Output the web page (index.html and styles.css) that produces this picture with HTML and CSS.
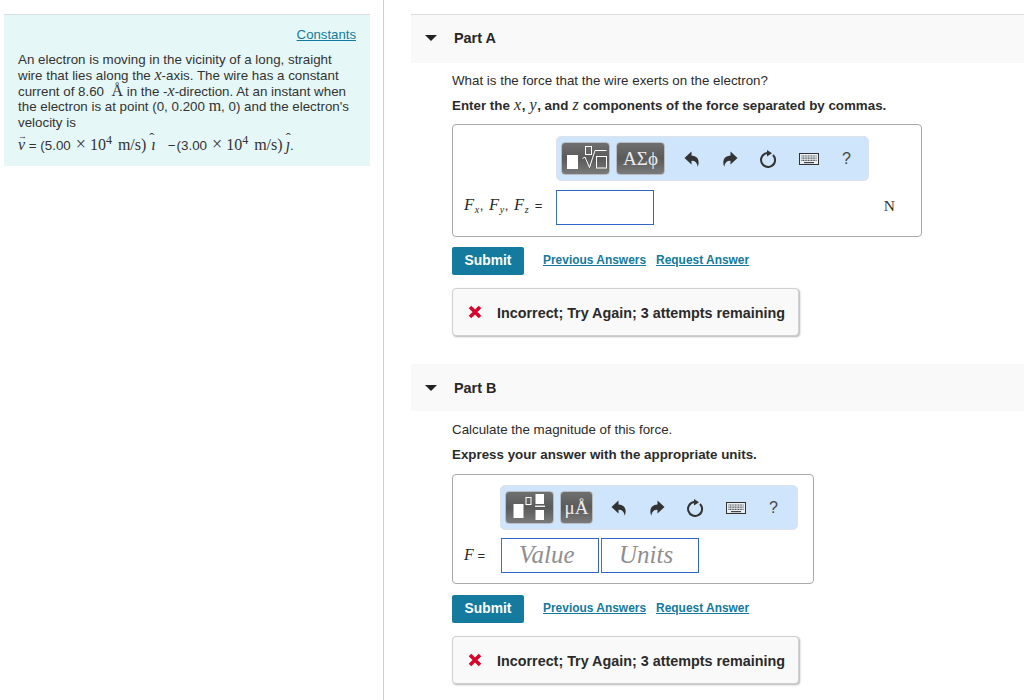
FILE: index.html
```html
<!DOCTYPE html>
<html lang="en">
<head>
<meta charset="utf-8">
<title>Part A and B</title>
<link rel="stylesheet" href="styles.css">
</head>
<body>
<svg class="defs" width="0" height="0" aria-hidden="true">
  <defs>
    <symbol id="undo" viewBox="0 0 16 16"><path d="M7.5 0.5 L0.5 7 L7.5 13.5 V9.8 C11 9.6 13 11.5 13.8 15.8 C15.8 10 14.5 5 7.5 4.4 Z"/></symbol>
    <symbol id="redo" viewBox="0 0 16 16"><path d="M8.5 0.5 L15.5 7 L8.5 13.5 V9.8 C5 9.6 3 11.5 2.2 15.8 C0.2 10 1.5 5 8.5 4.4 Z"/></symbol>
    <symbol id="reset" viewBox="0 0 18 18"><path d="M14 5 A7 7 0 1 1 8.5 3" fill="none" stroke="#333" stroke-width="2"/><path d="M8 0 L13 3.2 L8 6.5 Z" fill="#333"/></symbol>
    <symbol id="kbd" viewBox="0 0 20 12"><rect x="0.5" y="0.5" width="19" height="11" fill="#e8eef4" stroke="#333"/><path d="M2.5 3 H17.5 M2.5 5.2 H17.5 M2.5 7.4 H17.5" stroke="#444" stroke-width="1.2" stroke-dasharray="1 .6"/><path d="M5 9.6 H15" stroke="#444" stroke-width="1.2"/></symbol>
  </defs>
</svg>
<div class="page">
  <aside class="left">
    <div class="intro">
      <a class="constants" href="#">Constants</a>
      <p class="prob">An electron is moving in the vicinity of a long, straight wire that lies along the <i class="m">x</i>-axis. The wire has a constant current of 8.60 &nbsp;<span class="r">Å</span> in the -<i class="m">x</i>-direction. At an instant when the electron is at point (0, 0.200 <span class="r">m</span>, 0) and the electron's velocity is</p>
      <p class="eq"><i class="m vec">v</i> = (5.00<span class="r tm">×</span><span class="r">10<sup>4</sup></span><span class="r un">m/s)</span><i class="m hat">ı</i><span class="minus">−</span>(3.00<span class="r tm">×</span><span class="r">10<sup>4</sup></span><span class="r un">m/s)</span><i class="m hat hat-j">ȷ</i>.</p>
    </div>
  </aside>
  <main class="right">
    <section class="part">
      <h2 class="head"><span class="tri"></span>Part A</h2>
      <div class="body">
        <p class="q">What is the force that the wire exerts on the electron?</p>
        <p class="ins">Enter the <i class="m">x</i>, <i class="m">y</i>, and <i class="m">z</i> components of the force separated by commas.</p>
        <div class="ans ans-a">
          <div class="tb-row tb-row-a">
            <div class="tb tb-a">
              <span class="btn btn-l btn-root">
                <span class="sq-big"></span>
                <svg class="root" width="26" height="26" viewBox="0 0 26 26"><path d="M0.5 12.5 L3 11 L7.5 21.5 L13 4.5 H24.5" fill="none" stroke="#fff" stroke-width="1"/><rect x="3.5" y="0.5" width="6" height="8" fill="none" stroke="#fff"/><rect x="14.5" y="10.5" width="10" height="11.5" fill="none" stroke="#fff"/></svg>
              </span>
              <span class="btn btn-l greek">ΑΣϕ</span>
              <span class="tools">
                <svg class="i16"><use href="#undo"/></svg>
                <svg class="i16"><use href="#redo"/></svg>
                <svg class="i18"><use href="#reset"/></svg>
                <svg class="i20"><use href="#kbd"/></svg>
                <span class="help">?</span>
              </span>
            </div>
          </div>
          <div class="in-row">
            <span class="lab lab-a"><i class="m">F<sub>x</sub></i>, <i class="m">F<sub>y</sub></i>, <i class="m">F<sub>z</sub></i> =</span>
            <span class="field"></span>
            <span class="unit">N</span>
          </div>
        </div>
        <div class="acts">
          <span class="submit">Submit</span>
          <a class="alink" href="#">Previous Answers</a>
          <a class="alink" href="#">Request Answer</a>
        </div>
        <div class="fb"><svg class="x" width="14" height="14" viewBox="0 0 14 14"><path d="M2 2 L12 12 M12 2 L2 12" stroke="#d9042b" stroke-width="3.6"/></svg>Incorrect; Try Again; 3 attempts remaining</div>
      </div>
    </section>
    <section class="part">
      <h2 class="head head-b"><span class="tri"></span>Part B</h2>
      <div class="body body-b">
        <p class="q">Calculate the magnitude of this force.</p>
        <p class="ins">Express your answer with the appropriate units.</p>
        <div class="ans ans-b">
          <div class="tb-row tb-row-b">
            <div class="tb tb-b">
              <span class="btn btn-l">
                <svg width="44" height="28" viewBox="0 0 44 28"><rect x="5.5" y="10" width="10" height="14" fill="#fff"/><rect x="18" y="3.5" width="5" height="7" fill="none" stroke="#fff"/><rect x="27.5" y="0" width="8.5" height="10" fill="#fff"/><rect x="27" y="11.6" width="10" height="1.3" fill="#fff"/><rect x="27.5" y="16" width="8.5" height="10" fill="#fff"/></svg>
              </span>
              <span class="btn btn-s greek">μÅ</span>
              <span class="tools tools-b">
                <svg class="i16"><use href="#undo"/></svg>
                <svg class="i16"><use href="#redo"/></svg>
                <svg class="i18"><use href="#reset"/></svg>
                <svg class="i20"><use href="#kbd"/></svg>
                <span class="help">?</span>
              </span>
            </div>
          </div>
          <div class="in-row in-row-b">
            <span class="lab lab-b"><i class="m">F</i> =</span>
            <span class="field ph">Value</span>
            <span class="field ph">Units</span>
          </div>
        </div>
        <div class="acts">
          <span class="submit">Submit</span>
          <a class="alink" href="#">Previous Answers</a>
          <a class="alink" href="#">Request Answer</a>
        </div>
        <div class="fb"><svg class="x" width="14" height="14" viewBox="0 0 14 14"><path d="M2 2 L12 12 M12 2 L2 12" stroke="#d9042b" stroke-width="3.6"/></svg>Incorrect; Try Again; 3 attempts remaining</div>
      </div>
    </section>
  </main>
</div>
</body>
</html>
```

FILE: styles.css
```css
* { box-sizing: border-box; }
html, body { margin: 0; padding: 0; height: 700px; overflow: hidden; background: #fff; }
body { font-family: "Liberation Sans", Arial, sans-serif; font-size: 13px; color: #2b2b2b; }
.defs { position: absolute; }
.page { display: flex; height: 700px; }
.left { width: 384px; flex: none; border-right: 1px solid #c6cfdc; padding: 14px 13px 0 4px; }
.intro { background: #e6f7f8; border-top: 1px solid #d8dfe3; height: 152px; padding: 11px 14px 0 14px; }
.constants { display: block; text-align: right; color: #117a9e; font-size: 13.2px; line-height: 18px; text-decoration: underline; }
.prob { margin: 8px 0 0; line-height: 15.8px; font-size: 13.35px; color: #333; }
.eq { margin: 7px 0 0; line-height: 16px; height: 16px; font-size: 13.35px; color: #333; white-space: nowrap; }
.m { font-family: "Liberation Serif", serif; font-style: italic; font-size: 16px; line-height: 0; }
.r { font-family: "Liberation Serif", serif; font-size: 16px; line-height: 0; }
.tm { margin: 0 4px 0 5px; font-size: 18px; }
.un { margin-left: 6px; }
.minus { margin: 0 1px 0 12px; }
.vec, .hat { position: relative; }
.hat { margin-left: 5px; }
.vec::before { content: "→"; position: absolute; left: 0; top: -8px; font-size: 9px; font-style: normal; line-height: 16px; }
.hat::before { content: "ˆ"; position: absolute; left: -2px; top: -6px; font-size: 15px; font-style: normal; line-height: 16px; }
.hat-j { margin-left: 3px; }
.hat-j::before { left: 0; }
sup { font-size: 12px; line-height: 0; vertical-align: 6px; }
sub { font-size: 10px; line-height: 0; vertical-align: -3px; }
.right { flex: 1; min-width: 0; padding: 14px 0 0 27px; }
.head { display: flex; align-items: center; height: 49px; margin: 0; padding: 0 0 2px 14px; background: #f9f9f9; border-top: 1px solid #dcdcdc; font-size: 14.4px; font-weight: 700; color: #272727; }
.head-b { height: 47px; padding-bottom: 0; border-top: 0; }
.tri { width: 0; height: 0; border-left: 6px solid transparent; border-right: 6px solid transparent; border-top: 6px solid #222; margin-right: 17px; }
.body { padding: 10px 0 0 41px; }
.body-b { padding-top: 11px; }
.q { margin: 0; line-height: 16px; height: 16px; font-size: 13.35px; color: #2b2b2b; }
.ins { margin: 9px 0 0; line-height: 16px; height: 16px; font-size: 13.35px; font-weight: 700; color: #2b2b2b; }
.ins .m { font-weight: 400; margin: 0 .5px; }
.ans { margin-top: 10px; border: 1px solid #a9a9a9; border-radius: 4px; height: 113px; padding-top: 11px; background: #fff; }
.ans-a { width: 470px; }
.ans-b { width: 362px; height: 110px; margin-top: 11px; padding-top: 10px; }
.tb-row { display: flex; }
.tb-row-a { padding-left: 103px; }
.tb-row-b { padding-left: 47px; }
.tb { display: flex; align-items: center; height: 45px; background: #cfe5fb; border: 1px solid #dde3e8; border-radius: 5px; padding-left: 4px; }
.tb-a { width: 313px; }
.tb-b { width: 298px; }
.btn { display: flex; align-items: center; justify-content: center; width: 49px; height: 33px; border-radius: 4px; border: 1px solid #b6bcc2; background: linear-gradient(#6f6f6f, #5a5a5a 50%, #7a7a7a); color: #fff; margin-right: 6px; }
.btn-s { width: 33px; }
.btn-root { justify-content: flex-start; align-items: flex-start; padding-left: 5px; }
.sq-big { width: 11px; height: 14px; background: #fff; margin: 12px 4px 0 0; }
.root { display: block; margin-top: 3px; }
.greek { font-family: "Liberation Serif", serif; font-size: 19px; color: #ececec; }
.tools { display: flex; align-items: center; gap: 21.6px; padding-left: 13px; }
.tools-b { padding-left: 12px; }
.i16 { width: 16px; height: 16px; fill: #333; flex: none; }
.i18 { width: 18px; height: 18px; flex: none; }
.i20 { width: 20px; height: 12px; flex: none; }
.help { font-size: 16px; color: #444; width: 12px; text-align: center; }
.in-row { display: flex; align-items: center; height: 35px; margin-top: 9px; padding-left: 11px; }
.in-row-b { margin-top: 8px; }
.lab { font-size: 13px; white-space: nowrap; }
.lab-a { width: 92px; margin-bottom: 5px; word-spacing: 2px; }
.lab-a .m { font-size: 16.5px; letter-spacing: .6px; }
.lab-b { width: 37px; }
.lab-b .m { font-size: 16px; }
.field { display: block; width: 98px; height: 35px; border: 1px solid #2f64c8; border-left-color: #3d6ec9; background: #fff; }
.ph { font-family: "Liberation Serif", serif; font-style: italic; font-size: 25px; line-height: 32px; color: #8f8f8f; padding-left: 17px; margin-right: 2px; }
.unit { margin: 0 26px 4px auto; font-family: "Liberation Serif", serif; font-size: 15.5px; color: #333; }
.acts { display: flex; align-items: center; margin-top: 10px; height: 28px; }
.ans-b + .acts { margin-top: 11px; }
.submit { display: flex; align-items: center; justify-content: center; width: 72px; height: 28px; padding-bottom: 2px; background: #147b9e; color: #fff; font-weight: 700; font-size: 13.8px; border-radius: 2px; margin-right: 19px; }
.alink { color: #117a9e; font-weight: 700; font-size: 11.95px; text-decoration: underline; margin-right: 10px; position: relative; top: -1px; }
.fb { display: flex; align-items: center; width: 347px; height: 48px; margin-top: 13px; padding: 2px 0 0 15px; background: #f9f9f9; border: 1px solid #d0d0d0; border-radius: 4px; box-shadow: 1px 1px 2px #b5b5b5; font-weight: 700; font-size: 14.35px; color: #2a2a2a; white-space: nowrap; }
.x { margin: 0 15px 3px 0; flex: none; }
.part + .part { margin-top: 28px; }
```
